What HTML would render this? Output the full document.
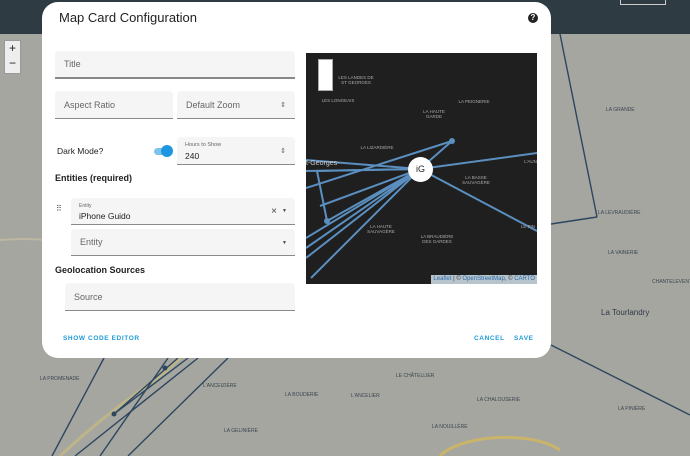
<!DOCTYPE html>
<html><head><style>
*{box-sizing:border-box;margin:0;padding:0}
body{width:690px;height:456px;overflow:hidden;position:relative;background:#a6a6a0;font-family:"Liberation Sans",sans-serif}
.top{position:absolute;left:0;top:0;width:690px;height:34px;background:#2e3b42}
.dlg{position:absolute;left:42px;top:2px;width:509px;height:356px;background:#fff;border-radius:16px}
.f{position:absolute;background:#f5f5f5;border-bottom:1px solid #8a8a8a;border-radius:4px 4px 0 0;font-size:9px;color:#666}
.f span{position:absolute;left:9px;top:50%;transform:translateY(-50%)}
.lbl{position:absolute;font-size:8.5px;color:#222}
.h{position:absolute;font-size:9px;font-weight:bold;color:#222}
.btn{position:absolute;font-size:6.5px;font-weight:bold;color:#1f9bd8;letter-spacing:.6px}
.sp{position:absolute;right:9px;top:50%;transform:translateY(-50%);font-size:7px;color:#666}
.ml{position:absolute;font-size:5px;color:#3a4550}
</style></head><body>
<svg style="position:absolute;left:0;top:0" width="690" height="456">
<path d="M0 240 C120 230 200 300 260 320" stroke="#bdb6a0" stroke-width="2" fill="none"/>
<path d="M60 456 C120 400 160 380 180 358" stroke="#bdb48a" stroke-width="3" fill="none"/>
<g stroke="#2d4660" stroke-width="1.4" fill="none">
<line x1="560" y1="34" x2="597" y2="217"/><line x1="597" y1="217" x2="551" y2="224"/>
<line x1="551" y1="345" x2="690" y2="415"/>
<line x1="104" y1="358" x2="52" y2="456"/>
<line x1="178" y1="358" x2="114" y2="414"/><line x1="188" y1="358" x2="114" y2="414"/>
<line x1="168" y1="358" x2="100" y2="456"/>
<line x1="198" y1="358" x2="75" y2="456"/>
<line x1="228" y1="358" x2="128" y2="456"/>
</g>
<circle cx="114" cy="414" r="2.5" fill="#2d4660"/><circle cx="165" cy="368" r="2.5" fill="#2d4660"/>
<path d="M440 456 C460 435 530 430 560 450" stroke="#c9b46a" stroke-width="3" fill="none"/>
</svg>
<div class="ml" style="left:40px;top:376px">LA PROMENADE</div>
<div class="ml" style="left:203px;top:383px">L'ANCEIZIÈRE</div>
<div class="ml" style="left:285px;top:392px">LA BOUDERIE</div>
<div class="ml" style="left:351px;top:393px">L'ANCELIER</div>
<div class="ml" style="left:396px;top:373px">LE CHÂTELLIER</div>
<div class="ml" style="left:477px;top:397px">LA CHALOUSERIE</div>
<div class="ml" style="left:224px;top:428px">LA GELINIÈRE</div>
<div class="ml" style="left:432px;top:424px">LA NOUILLÈRE</div>
<div class="ml" style="left:618px;top:406px">LA PINIÈRE</div>
<div class="ml" style="left:598px;top:210px">LA LEVRAUDIÈRE</div>
<div class="ml" style="left:608px;top:250px">LA VAINERIE</div>
<div class="ml" style="left:652px;top:279px">CHANTELEVENT</div>
<div class="ml" style="left:606px;top:107px">LA GRANDE</div>
<div class="top"></div>
<div style="position:absolute;left:4px;top:40px;width:17px;height:34px;background:#eee;border:1px solid #999;font-size:12px;text-align:center;line-height:15px;color:#222">+<br>−</div>
<div style="position:absolute;left:620px;top:0;width:46px;height:5px;border:1px solid #ccc;border-top:none"></div>
<div style="position:absolute;left:601px;top:308px;font-size:8px;color:#2e3a46">La Tourlandry</div>
<div class="dlg">
<div style="position:absolute;left:17px;top:8px;font-size:13px;color:#222">Map Card Configuration</div>
<div style="position:absolute;left:486px;top:11px;width:10px;height:10px;border-radius:50%;background:#222;color:#fff;font-size:8px;font-weight:bold;text-align:center;line-height:10px">?</div>
<div class="f" style="left:13px;top:49px;width:240px;height:28px;border-bottom:2px solid #888"><span>Title</span></div>
<div class="f" style="left:13px;top:89px;width:118px;height:28px"><span>Aspect Ratio</span></div>
<div class="f" style="left:135px;top:89px;width:118px;height:28px"><span>Default Zoom</span><div class="sp">⇕</div></div>
<div class="lbl" style="left:15px;top:144px">Dark Mode?</div>
<div style="position:absolute;left:112px;top:146px;width:15px;height:7px;border-radius:4px;background:#7cc4ec"></div>
<div style="position:absolute;left:119px;top:143px;width:12px;height:12px;border-radius:50%;background:#1e96e0"></div>
<div class="f" style="left:135px;top:135px;width:118px;height:28px"><div style="position:absolute;left:8px;top:5px;font-size:5.5px">Hours to Show</div><div style="position:absolute;left:8px;top:14px;font-size:8.5px;color:#222">240</div><div class="sp">⇕</div></div>
<div class="h" style="left:13px;top:171px">Entities (required)</div>
<div style="position:absolute;left:14px;top:202px;font-size:8px;color:#555;letter-spacing:-1px">⠿</div>
<div class="f" style="left:29px;top:196px;width:224px;height:27px"><div style="position:absolute;left:8px;top:5px;font-size:5px">Entity</div><div style="position:absolute;left:8px;top:13px;font-size:8.5px;color:#222">iPhone Guido</div><div style="position:absolute;right:18px;top:8px;font-size:10px;color:#444">×</div><div style="position:absolute;right:8px;top:10px;font-size:5px;color:#444">▼</div></div>
<div class="f" style="left:29px;top:227px;width:224px;height:27px"><span>Entity</span><div style="position:absolute;right:8px;top:11px;font-size:5px;color:#444">▼</div></div>
<div class="h" style="left:13px;top:263px">Geolocation Sources</div>
<div class="f" style="left:23px;top:281px;width:230px;height:28px"><span>Source</span></div>
<div class="btn" style="left:21px;top:333px">SHOW CODE EDITOR</div>
<div class="btn" style="left:432px;top:333px">CANCEL</div>
<div class="btn" style="left:472px;top:333px">SAVE</div>
<div style="position:absolute;left:264px;top:51px;width:231px;height:231px;background:#1f1f1f;overflow:hidden">
<svg width="231" height="231" style="position:absolute;left:0;top:0">
<g stroke="#5a8fc0" stroke-width="2" fill="none">
<line x1="114" y1="116" x2="0" y2="107"/><line x1="114" y1="116" x2="10" y2="118"/><line x1="114" y1="116" x2="0" y2="118"/>
<line x1="114" y1="116" x2="146" y2="88"/><line x1="146" y1="88" x2="0" y2="135"/>
<line x1="114" y1="116" x2="231" y2="100"/><line x1="114" y1="116" x2="231" y2="178"/>
<line x1="114" y1="116" x2="14" y2="153"/><line x1="114" y1="116" x2="21" y2="168"/>
<line x1="114" y1="116" x2="0" y2="185"/><line x1="114" y1="116" x2="0" y2="195"/><line x1="114" y1="116" x2="0" y2="205"/><line x1="114" y1="116" x2="5" y2="225"/>
<line x1="11" y1="118" x2="21" y2="168"/>
</g>
<circle cx="146" cy="88" r="3" fill="#5a8fc0"/><circle cx="21" cy="168" r="3" fill="#5a8fc0"/>
<g fill="#aaa" font-size="4.5" font-family="Liberation Sans" text-anchor="middle">
<text x="50" y="26">LES LANDES DE</text><text x="50" y="31">ST GEORGES</text><text x="32" y="49">LES LONGEAIS</text>
<text x="128" y="60">LA HAUTE</text><text x="128" y="65">GARDE</text><text x="168" y="50">LA PEIGNERIE</text>
<text x="71" y="96">LA LIZARDIÈRE</text><text x="170" y="126">LA BASSE</text><text x="170" y="131">SAUVAGÈRE</text>
<text x="75" y="175">LA HAUTE</text><text x="75" y="180">SAUVAGÈRE</text><text x="131" y="185">LA BRAUDIÈRE</text><text x="131" y="190">DES GARDES</text>
<text x="222" y="175">LE PIN</text><text x="226" y="110">L'AUNA</text></g>
<text x="0" y="112" fill="#ccc" font-size="7" font-family="Liberation Sans">t-Georges-</text>
</svg>
<div style="position:absolute;left:12px;top:6px;width:15px;height:32px;background:#fff;border:1px solid #aaa"></div>
<div style="position:absolute;left:102px;top:104px;width:25px;height:25px;border-radius:50%;background:#fff;font-size:9px;color:#222;text-align:center;line-height:25px">iG</div>
<div style="position:absolute;right:0;bottom:0;height:9px;padding:0 2px;background:#b8c4cc;font-size:6px;color:#333;line-height:9px"><span style="color:#2a6aa8">Leaflet</span> | © <span style="color:#2a6aa8">OpenStreetMap</span>, © <span style="color:#2a6aa8">CARTO</span></div>
</div>
</div>
</body></html>
